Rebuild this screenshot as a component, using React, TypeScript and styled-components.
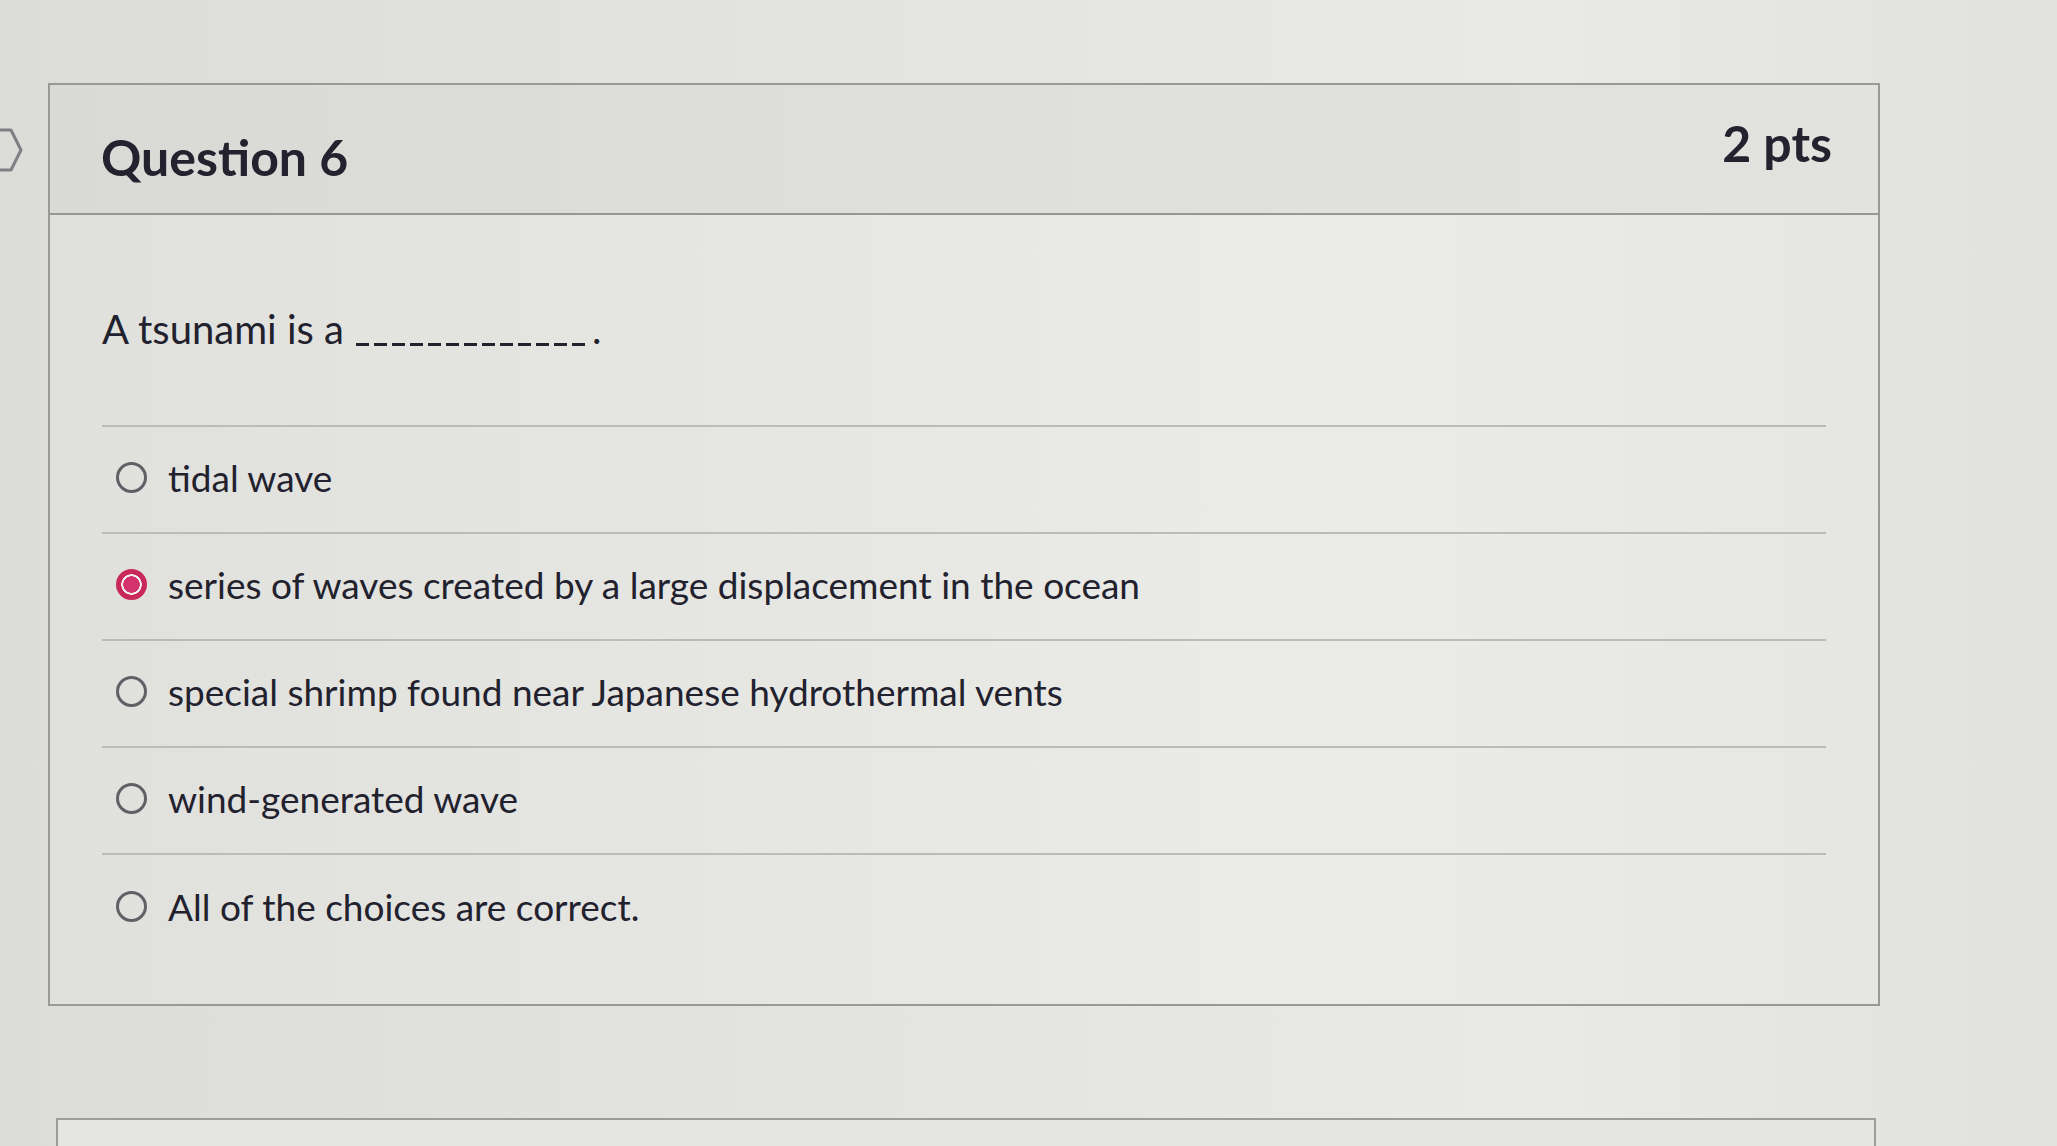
import React from "react"
import styled, { createGlobalStyle } from "styled-components"

const GlobalStyle = createGlobalStyle`
  html, body {
    margin: 0;
    padding: 0;
    background: linear-gradient(90deg, #dcdcd9 0%, #e4e4e1 45%, #e9e9e6 75%, #e1e1de 100%);
    font-family: Lato, "Open Sans", sans-serif;
    color: #22212e;
    overflow: hidden;
  }
  #root {
    height: 1146px;
  }
`

const Page = styled.div`
  display: flex;
  flex-direction: column;
  padding-top: 83px;
  height: 1146px;
  box-sizing: border-box;
  overflow: hidden;
`

const QuestionRow = styled.div`
  display: flex;
  align-items: flex-start;
`

const Gutter = styled.div`
  width: 48px;
  flex: none;
  padding-top: 44px;
  display: flex;
`

const Card = styled.div`
  width: 1832px;
  border: 2px solid #999999;
  background: linear-gradient(90deg, #e0e0dd 0%, #e6e6e3 40%, #ebebe8 70%, #e6e6e3 100%);
  box-sizing: border-box;
`

const Header = styled.div`
  height: 128px;
  display: flex;
  justify-content: space-between;
  align-items: flex-start;
  padding: 0 46px 0 51px;
  background: linear-gradient(90deg, #d9d9d6 0%, #dfdfdc 50%, #e2e2df 100%);
  border-bottom: 2px solid #969696;
`

const Title = styled.h2<{ $top: number }>`
  margin: 0;
  padding-top: ${p => p.$top}px;
  font-size: 50px;
  font-weight: 700;
  line-height: 60px;
  color: #23222e;
`

const Body = styled.div`
  padding: 0 52px 42px 52px;
`

const Prompt = styled.div`
  padding: 90px 0 72px 0;
  font-size: 40px;
  line-height: 48px;
  border-bottom: 2px solid #bbbbb9;
`

const Blank = styled.span`
  display: inline-block;
  margin: 0 2px 0 12px;
  width: 234px;
  height: 3px;
  vertical-align: -2px;
  background: repeating-linear-gradient(90deg, #22212e 0 13px, transparent 13px 18px);
`

const Answer = styled.label<{ $last?: boolean }>`
  display: flex;
  align-items: center;
  gap: 21px;
  height: 107px;
  padding: 0 0 4px 14px;
  font-size: 37px;
  border-bottom: ${p => (p.$last ? "none" : "2px solid #bbbbb9")};
  box-sizing: border-box;
`

const Radio = styled.span<{ $checked?: boolean }>`
  width: 31px;
  height: 31px;
  border-radius: 50%;
  flex: none;
  box-sizing: border-box;
  border: 3px solid ${p => (p.$checked ? "#c8285c" : "#606066")};
  background: ${p => (p.$checked ? "radial-gradient(circle, #d3326c 0 8px, #f4f0f0 8.5px 10px, #c8285c 10.5px)" : "transparent")};
`

const NextCard = styled.div`
  margin: 112px 0 0 56px;
  width: 1816px;
  height: 60px;
  border: 2px solid #9c9c9c;
  border-bottom: none;
  background: #e4e4e1;
`

const Chevron = () => (
  <svg width="24" height="46" viewBox="0 0 24 46">
    <path d="M-2 3 L11 3 L21 23 L11 43 L-2 43" fill="none" stroke="#808084" strokeWidth="3" strokeLinejoin="round" />
  </svg>
)

const answers = [
  "tidal wave",
  "series of waves created by a large displacement in the ocean",
  "special shrimp found near Japanese hydrothermal vents",
  "wind-generated wave",
  "All of the choices are correct.",
]

const App = () => {
  return (
    <Page>
      <GlobalStyle />
      <QuestionRow>
        <Gutter>
          <Chevron />
        </Gutter>
        <Card>
          <Header>
            <Title $top={42}>Question 6</Title>
            <Title $top={28}>2 pts</Title>
          </Header>
          <Body>
            <Prompt>
              A tsunami is a<Blank />.
            </Prompt>
            {answers.map((a, i) => (
              <Answer key={i} $last={i === answers.length - 1}>
                <Radio $checked={i === 1} />
                {a}
              </Answer>
            ))}
          </Body>
        </Card>
      </QuestionRow>
      <NextCard />
    </Page>
  )
}

export default App
